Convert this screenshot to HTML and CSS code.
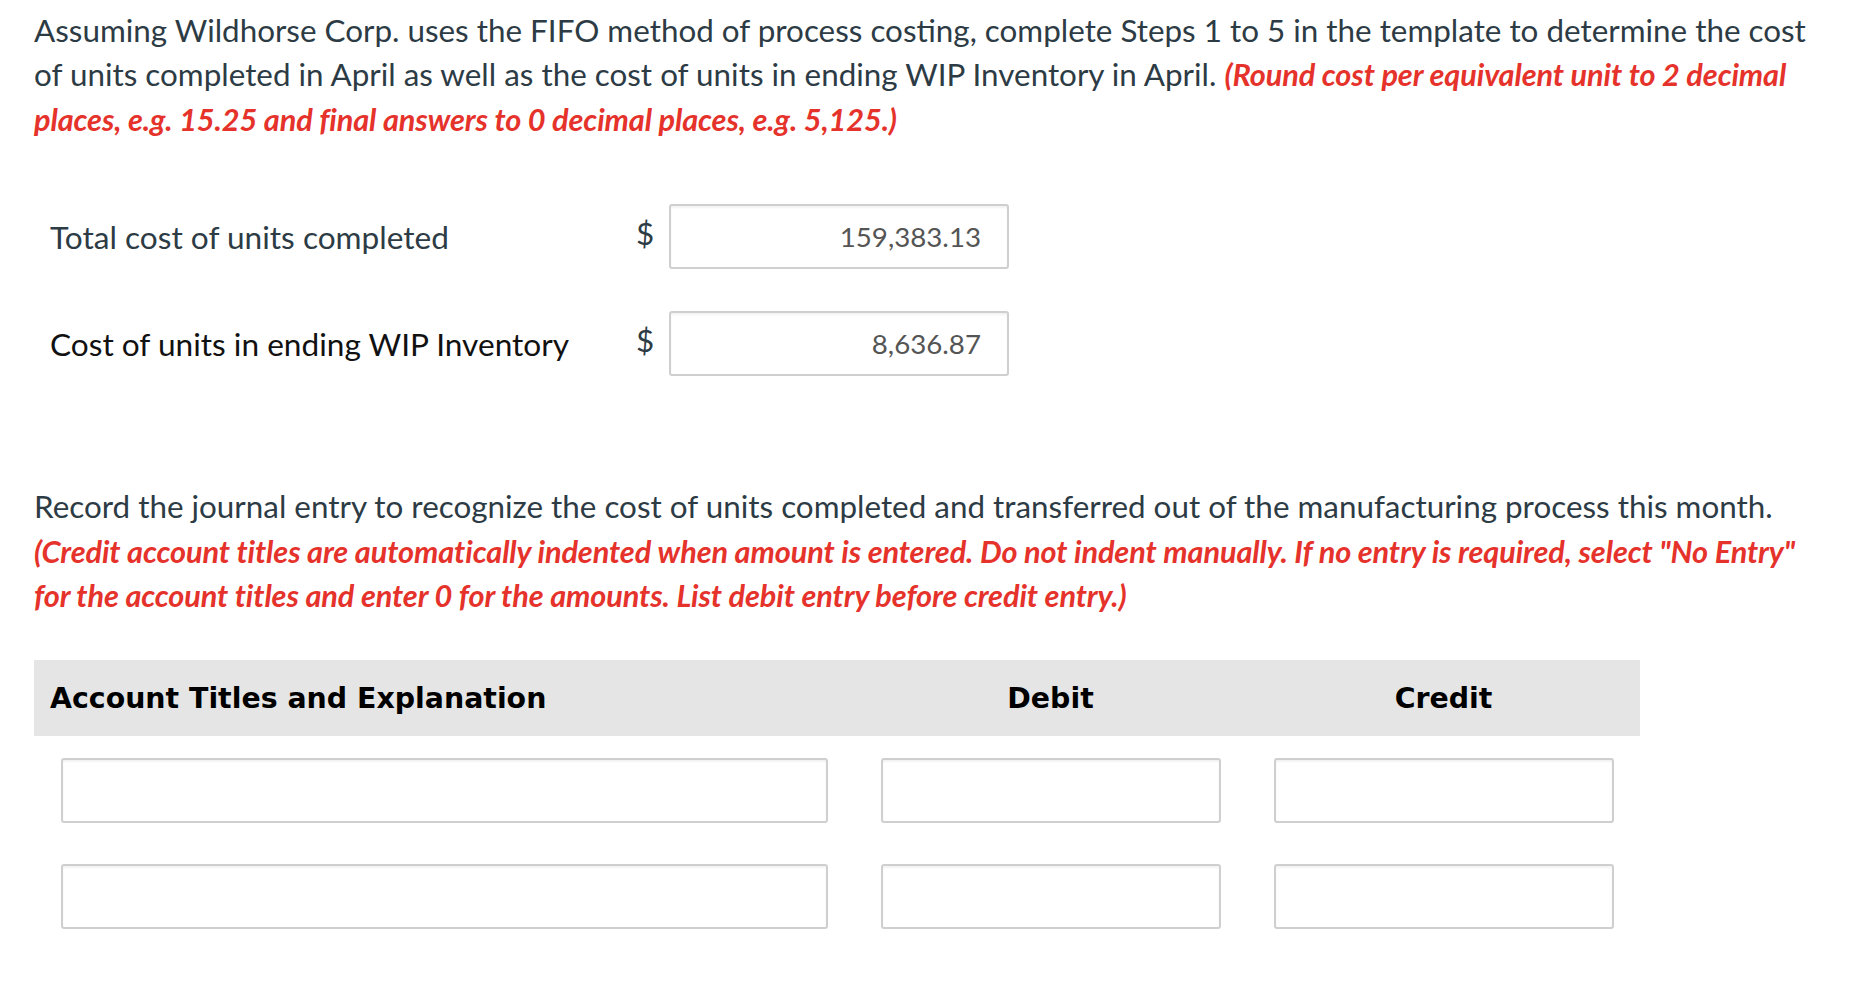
FILE: index.html
```html
<!DOCTYPE html>
<html lang="en">
<head>
<meta charset="utf-8">
<title>Process costing</title>
<link rel="stylesheet" href="styles.css">
</head>
<body>
<main class="page">
  <p class="prompt">Assuming Wildhorse Corp. uses the FIFO method of process costing, complete Steps 1 to 5 in the template to determine the cost of units completed in April as well as the cost of units in ending WIP Inventory in April. <span class="note">(Round cost per equivalent unit to 2 decimal places, e.g. 15.25 and final answers to 0 decimal places, e.g. 5,125.)</span></p>

  <div class="answers">
    <div class="answer-row">
      <span class="label">Total cost of units completed</span>
      <span class="cur">$</span>
      <div class="field num">159,383.13</div>
    </div>
    <div class="answer-row">
      <span class="label dark">Cost of units in ending WIP Inventory</span>
      <span class="cur">$</span>
      <div class="field num">8,636.87</div>
    </div>
  </div>

  <p class="prompt second">Record the journal entry to recognize the cost of units completed and transferred out of the manufacturing process this month.<br><span class="note">(Credit account titles are automatically indented when amount is entered. Do not indent manually. If no entry is required, select "No Entry" for the account titles and enter 0 for the amounts. List debit entry before credit entry.)</span></p>

  <table class="journal">
    <thead>
      <tr>
        <th class="col-acct">Account Titles and Explanation</th>
        <th class="col-amt">Debit</th>
        <th class="col-amt">Credit</th>
      </tr>
    </thead>
    <tbody>
      <tr>
        <td><div class="field"></div></td>
        <td><div class="field"></div></td>
        <td><div class="field"></div></td>
      </tr>
      <tr>
        <td><div class="field"></div></td>
        <td><div class="field"></div></td>
        <td><div class="field"></div></td>
      </tr>
    </tbody>
  </table>
</main>
</body>
</html>
```

FILE: styles.css
```css
* { box-sizing: border-box; }

html, body {
  margin: 0;
  padding: 0;
  background: #ffffff;
}

body {
  font-family: Lato, "Open Sans", "Liberation Sans", sans-serif;
  color: #2d3b45;
}

.page {
  padding: 0 22px 0 34px;
}

.prompt {
  margin: 0;
  font-size: 31.4px;
  line-height: 44.4px;
  padding-top: 8px;
}

.prompt .note {
  color: #e5322b;
  font-weight: 700;
  font-style: italic;
  font-size: 30.7px;
  line-height: 1;
  letter-spacing: -0.1px;
}

.answers {
  display: flex;
  flex-direction: column;
  gap: 42px;
  padding: 63px 0 0 16px;
}

.answer-row {
  display: grid;
  grid-template-columns: 586px 33px 340px;
  align-items: center;
  height: 65px;
}

.label {
  font-size: 31.6px;
  color: #2d3b45;
}

.label.dark {
  color: #111111;
}

.cur {
  font-size: 31.4px;
  color: #2d3b45;
  align-self: start;
  padding-top: 10px;
}

.field {
  height: 65px;
  border: 2px solid #cfcfcf;
  border-radius: 3px;
  background: #ffffff;
  box-shadow: inset 0 2px 2px rgba(0, 0, 0, 0.05);
}

.field.num {
  display: flex;
  align-items: center;
  justify-content: flex-end;
  padding-right: 26px;
  font-size: 27.7px;
  color: #555555;
}

.prompt.second {
  padding-top: 108px;
}

.journal {
  margin-top: 43px;
  width: 1606px;
  border-collapse: collapse;
  table-layout: fixed;
}

.journal th {
  background: #e5e5e5;
  height: 76px;
  font-family: Verdana, "DejaVu Sans", sans-serif;
  font-weight: 700;
  font-size: 28.4px;
  color: #000000;
  padding: 0;
}

.journal th.col-acct {
  width: 820px;
  text-align: left;
  padding-left: 16px;
}

.journal th.col-amt {
  text-align: center;
}

.journal td {
  padding: 22px 26px 19px 27px;
}
```
